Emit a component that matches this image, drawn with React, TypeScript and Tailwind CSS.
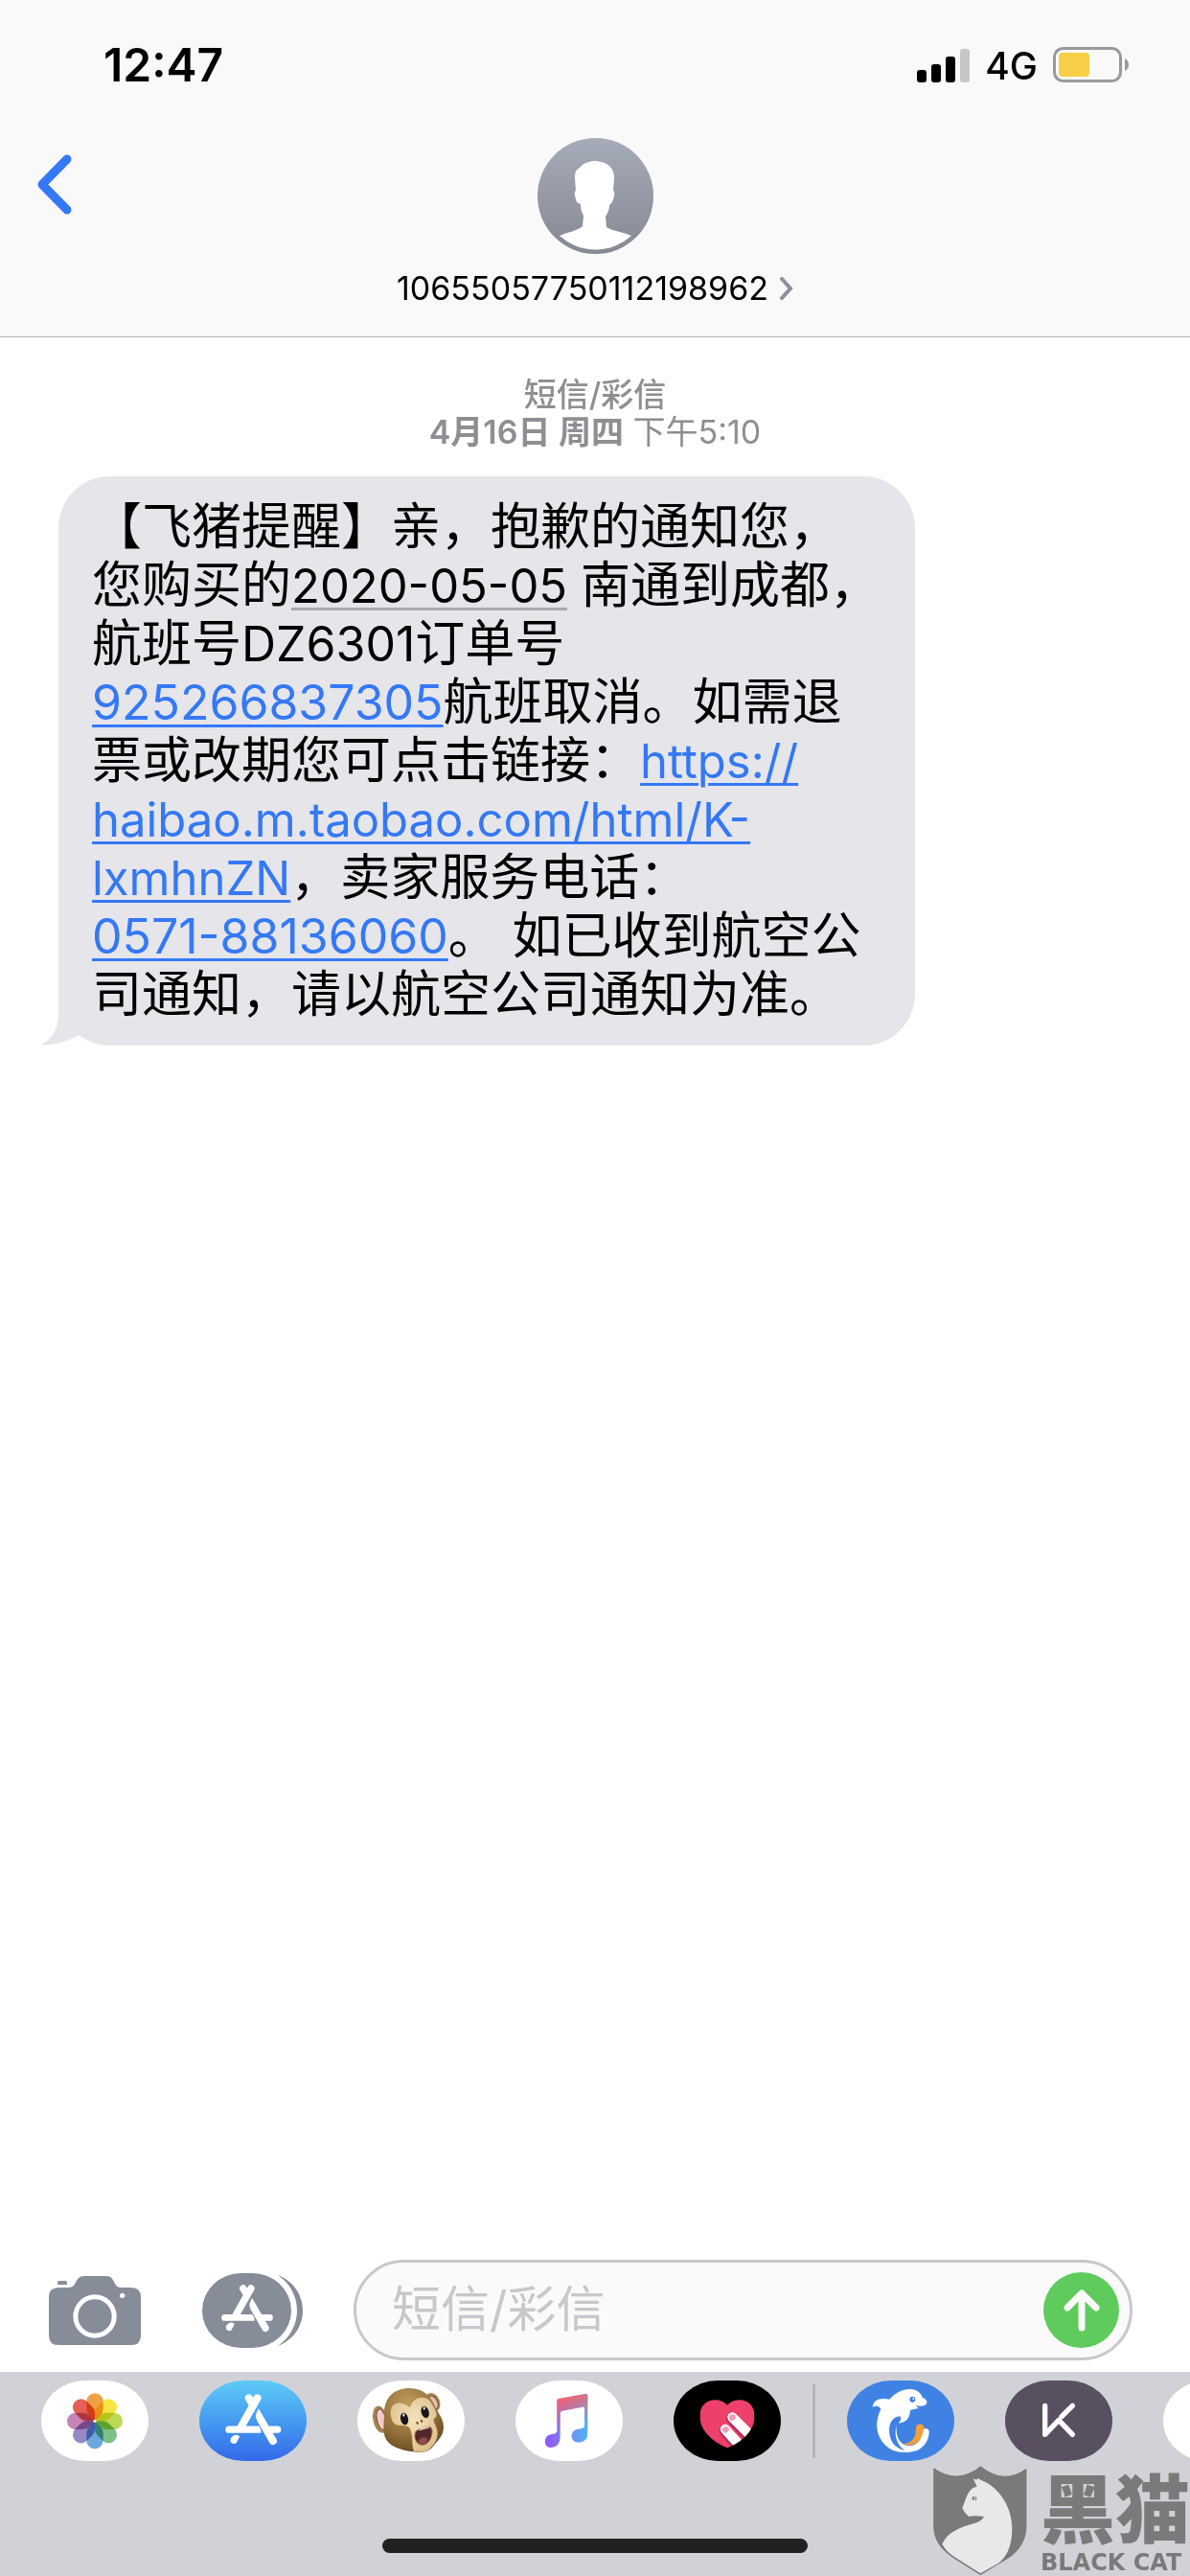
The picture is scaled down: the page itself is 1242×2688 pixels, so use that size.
import { ReactNode } from "react";

type AppButtonProps = {
	label: string;
	className: string;
	viewBox: string;
	children?: ReactNode;
};

const link =
	"leading-none text-[#3478f6] underline decoration-[3px] underline-offset-[5px]";

function AppStoreGlyph() {
	return (
		<g fill="#fff">
			<path d="M-77 21H17Q25 28 25 43H-77A11 11 0 0 1-77 21Z" />
			<path d="M44 21H77A11 11 0 0 1 77 43H56Z" />
			<path
				d="M13-68L-38 22M-14-68L0-44"
				fill="none"
				stroke="#fff"
				strokeWidth="24"
				strokeLinecap="round"
			/>
			<path d="M17-35L73 62A12 12 0 0 1 52 74L12 4Q2-14 17-35Z" />
			<path d="M-70 58Q-60 43-43 53L-53 73A11 11 0 0 1-72 63Z" />
		</g>
	);
}

function StatusBar() {
	return (
		<div className="flex h-34 items-center justify-between pr-[63px] pl-27">
			<span className="text-[48px] leading-none font-semibold">12:47</span>
			<div className="flex items-center">
				<svg width="55" height="35" viewBox="0 0 55 35">
					<rect y="22" width="10" height="13" rx="3" />
					<rect x="15" y="16" width="10" height="19" rx="3" />
					<rect x="30" y="8" width="10" height="27" rx="3" />
					<rect x="45" width="10" height="35" rx="3" fill="#c7c7c7" />
				</svg>
				<span className="ml-4 text-[39px] leading-none font-medium">4G</span>
				<svg className="ml-4" width="80" height="38" viewBox="0 0 80 38">
					<rect
						x="1.5"
						y="1.5"
						width="69"
						height="34"
						rx="9"
						fill="none"
						stroke="#999"
						strokeWidth="3"
					/>
					<rect x="6" y="6" width="32" height="25" rx="4" fill="#f7ce46" />
					<path d="M75 12Q79 14 79 18.500T75 25Z" fill="#999" />
				</svg>
			</div>
		</div>
	);
}

function Header() {
	return (
		<header className="border-b border-[#b2b2b2] bg-[#f9f9f9]">
			<StatusBar />
			<div className="grid grid-cols-[1fr_auto_1fr] items-start pt-2 pb-[30px]">
				<button
					type="button"
					aria-label="返回"
					className="mt-4 ml-9 justify-self-start"
				>
					<svg width="42" height="65" viewBox="0 0 42 65">
						<path
							d="M34 6L8 32.500L34 59"
							fill="none"
							stroke="#3478f6"
							strokeWidth="9"
							strokeLinecap="round"
							strokeLinejoin="round"
						/>
					</svg>
				</button>
				<button type="button" className="flex flex-col items-center gap-4">
					<svg width="121" height="121" viewBox="0 0 121 121">
						<defs>
							<linearGradient id="avatar" x1="0" y1="0" x2="0" y2="1">
								<stop offset="0" stopColor="#a6abb9" />
								<stop offset="1" stopColor="#848992" />
							</linearGradient>
						</defs>
						<circle cx="60.500" cy="60.500" r="60.500" fill="url(#avatar)" />
						<path
							d="M60.500 24C70 25 80 28 80 42L79 55C82 57 79 63 78 67L75 70Q75 76 71 82L72 93C77 97 90 98 98 102A56 56 0 0 1 23 102C31 98 42 97 47 92L48 81Q45 76 45 69L41 67C40 63 37 57 40 55L39 42C39 34 41 33 44 31C48 26 54 24 60.500 24Z"
							fill="#fff"
						/>
					</svg>
					<span className="flex items-center gap-3 text-[34px] leading-10">
						10655057750112198962
						<svg width="14" height="24" viewBox="0 0 14 24">
							<path
								d="M2 2L11 12L2 22"
								fill="none"
								stroke="#8a919c"
								strokeWidth="4"
								strokeLinecap="round"
							/>
						</svg>
					</span>
				</button>
			</div>
		</header>
	);
}

function Message() {
	return (
		<div className="relative mt-[27px] ml-[61px] w-[72%] rounded-[54px] bg-[#e5e5ea] px-[35px] pt-[22px] pb-[23px]">
			<svg
				className="absolute bottom-0 -left-[18px]"
				width="60"
				height="54"
				viewBox="0 0 60 54"
			>
				<path d="M18 0V22Q18 43 0 53.500Q20 54 39 43L60 30V0Z" fill="#e5e5ea" />
			</svg>
			<p className="relative text-[52px] leading-[61px] whitespace-nowrap">
				【飞猪提醒】亲，抱歉的通知您，
				<br />
				您购买的
				<span className="text-[49px] leading-none">
					<a
						href="#date"
						className="underline decoration-[#a9a9ae] decoration-[3px] underline-offset-[5px]"
					>
						2020-05-05
					</a>{" "}
				</span>
				南通到成都，
				<br />
				航班号<span className="text-[50px] leading-none">DZ6301</span>订单号
				<br />
				<a href="tel:925266837305" className={`text-[50px] ${link}`}>
					925266837305
				</a>
				航班取消。如需退
				<br />
				票或改期您可点击链接：
				<a href="#link" className={`text-[49px] ${link}`}>
					https://
					<br />
					haibao.m.taobao.com/html/K-
					<br />
					lxmhnZN
				</a>
				，卖家服务电话：
				<br />
				<a href="tel:0571-88136060" className={`text-[50px] ${link}`}>
					0571-88136060
				</a>
				。 如已收到航空公
				<br />
				司通知，请以航空公司通知为准。
			</p>
		</div>
	);
}

function Composer() {
	return (
		<form
			className="flex items-center pr-15 pb-3 pl-[51px]"
			onSubmit={(e) => e.preventDefault()}
		>
			<button type="button" aria-label="相机">
				<svg width="96" height="72" viewBox="153 129 288 216">
					<path
						d="M180 156V149Q180 144 186 144H204Q210 144 210 149V156ZM183 165H212Q228 165 233 156L241 142Q248 129 265 129H332Q348 129 354 142L362 156Q367 165 380 165H411Q441 165 441 195V315Q441 345 411 345H183Q153 345 153 315V195Q153 165 183 165Z"
						fill="#868c98"
					/>
					<circle
						cx="297"
						cy="255"
						r="60.500"
						fill="none"
						stroke="#fff"
						strokeWidth="15"
					/>
					<circle cx="383" cy="190" r="8" fill="#fff" />
				</svg>
			</button>
			<button type="button" aria-label="应用" className="ml-16">
				<svg width="105" height="78" viewBox="633 120 315 234">
					<g fill="#868c98">
						<rect x="633" y="120" width="279" height="234" rx="122" ry="117" />
						<path d="M870 126C920 145 948 190 948 237C948 284 920 329 870 348C908 322 930 282 930 237C930 192 908 152 870 126Z" />
					</g>
					<g transform="translate(774 230) scale(.915)">
						<AppStoreGlyph />
					</g>
				</svg>
			</button>
			<div className="ml-[53px] flex h-[105px] min-w-0 flex-1 items-center rounded-full border-[3px] border-[#c7c7cc] bg-[#fafafa] pr-[11px] pl-[37px]">
				<input
					type="text"
					aria-label="短信/彩信"
					placeholder="短信/彩信"
					className="min-w-0 flex-1 bg-transparent text-[51px] outline-none placeholder:text-[#c7c7cc]"
				/>
				<button
					type="submit"
					aria-label="发送"
					className="flex size-[79px] items-center justify-center rounded-full bg-[#5ecb5c]"
				>
					<svg width="38" height="44" viewBox="0 0 38 44">
						<path
							d="M19 4V40M4 19L19 4L34 19"
							fill="none"
							stroke="#fafafa"
							strokeWidth="7"
							strokeLinecap="round"
							strokeLinejoin="round"
						/>
					</svg>
				</button>
			</div>
		</form>
	);
}

function AppButton({ label, className, viewBox, children }: AppButtonProps) {
	return (
		<button
			type="button"
			aria-label={label}
			className={`h-21 w-28 shrink-0 overflow-hidden rounded-[46px/42px] ${className}`}
		>
			<svg width="112" height="84" viewBox={viewBox}>
				{children}
			</svg>
		</button>
	);
}

const petals = [
	{ angle: 0, color: "#f0a044" },
	{ angle: 45, color: "#f7e544" },
	{ angle: 90, color: "#bcd955" },
	{ angle: 135, color: "#7cc088" },
	{ angle: 180, color: "#6ba8dc" },
	{ angle: 225, color: "#978ac4" },
	{ angle: 270, color: "#c584b6" },
	{ angle: 315, color: "#e46058" },
];

function Monkey() {
	return (
		<>
			<defs>
				<radialGradient id="fur" cx=".4" cy=".25" r=".8">
					<stop offset="0" stopColor="#c09a5c" />
					<stop offset=".6" stopColor="#94703a" />
					<stop offset="1" stopColor="#634720" />
				</radialGradient>
				<radialGradient id="face" cx=".5" cy=".4" r=".7">
					<stop offset="0" stopColor="#f5e2bd" />
					<stop offset="1" stopColor="#d9bb85" />
				</radialGradient>
			</defs>
			<ellipse cx="111" cy="584" rx="23" ry="43" fill="#a58452" transform="rotate(-12 111 584)" />
			<ellipse cx="114" cy="584" rx="14" ry="33" fill="#f3c8c8" stroke="#6f552e" strokeWidth="3" transform="rotate(-12 114 584)" />
			<ellipse cx="275" cy="530" rx="22" ry="30" fill="#a58452" transform="rotate(-25 275 530)" />
			<ellipse cx="277" cy="531" rx="13" ry="22" fill="#eab9b4" stroke="#6f552e" strokeWidth="3" transform="rotate(-25 277 531)" />
			<path
				d="M123 566C122 515 155 486 202 486C245 486 270 512 284 548C300 575 312 590 308 617C304 640 290 650 276 668C262 686 240 689 214 685C175 680 136 668 125 638C118 615 123 590 123 566Z"
				fill="url(#fur)"
			/>
			<path
				d="M143 566C142 532 168 521 204 546C214 508 258 507 271 533C281 550 292 568 285 577C276 582 276 586 281 597C298 628 289 652 270 671C255 688 237 687 216 684C208 665 214 640 205 616C200 602 190 604 172 602C151 602 145 585 143 566Z"
				fill="url(#face)"
			/>
			<ellipse cx="186" cy="582" rx="12" ry="19" fill="#15171a" transform="rotate(-12 186 582)" />
			<ellipse cx="251" cy="561" rx="12" ry="19" fill="#15171a" transform="rotate(-16 251 561)" />
			<ellipse cx="184" cy="570" rx="3" ry="5" fill="#fff" />
			<ellipse cx="248" cy="549" rx="3" ry="5" fill="#fff" />
			<path
				d="M223 593L229 592L228 600ZM237 586L243 587L240 594Z"
				fill="#6a4a24"
				stroke="#6a4a24"
				strokeWidth="2"
			/>
			<path
				d="M219 632C219 618 229 615 243 613C254 610 262 602 270 610C277 620 272 644 260 656C249 667 232 666 225 655C220 648 218 640 219 632Z"
				fill="#52282b"
				stroke="#a87e50"
				strokeWidth="3"
			/>
			<path d="M232 616L262 607L265 610L233 619Z" fill="#f3eee2" />
			<path d="M228 653Q242 633 258 644L256 656Q240 668 228 653Z" fill="#8f4d50" />
		</>
	);
}

function AppStrip() {
	return (
		<div className="bg-[#d1d2d7] pt-[9px] pb-6">
			<div className="flex items-center gap-[33px] overflow-hidden pl-[43px]">
				<div className="flex gap-[53px]">
					<AppButton label="照片" className="bg-white" viewBox="-168 -127 336 252">
						<g className="isolate">
							{petals.map(({ angle, color }) => (
								<path
									key={angle}
									d="M-26-61A26 26 0 0 1 26-61V-37Q26-25 17-17L0 0L-17-17Q-26-25-26-37Z"
									fill={color}
									transform={`rotate(${angle})`}
									className="mix-blend-multiply"
								/>
							))}
						</g>
						<circle r="5" fill="#fff" />
					</AppButton>
					<AppButton
						label="App Store"
						className="bg-linear-to-b from-[#5fcbf6] to-[#3568e8]"
						viewBox="-171 -122 340 252"
					>
						<AppStoreGlyph />
					</AppButton>
					<AppButton label="动话表情" className="bg-white" viewBox="39 462 336 252">
						<Monkey />
					</AppButton>
					<AppButton label="音乐" className="bg-white" viewBox="534 462 336 252">
						<defs>
							<linearGradient id="noteBase">
								<stop offset="0" stopColor="#9455f5" />
								<stop offset="1" stopColor="#55b4f2" />
							</linearGradient>
							<linearGradient id="noteTop" x1="0" y1="0" x2=".25" y2="1">
								<stop offset=".15" stopColor="#f5646c" />
								<stop offset=".75" stopColor="#f5646c" stopOpacity="0" />
							</linearGradient>
						</defs>
						{["url(#noteBase)", "url(#noteTop)"].map((fill) => (
							<path
								key={fill}
								d="M664 526Q664 520 670 519L753 504Q760 503 760 510V630Q758 655 732 656C704 656 704 622 724 616C738 611 750 614 750 604V550Q750 543 743 545L680 557Q674 559 674 565V640Q672 671 646 672C620 672 622 638 640 632C652 629 664 630 664 618Z"
								fill={fill}
							/>
						))}
					</AppButton>
					<AppButton label="Digital Touch" className="bg-black" viewBox="1029 462 336 252">
						<clipPath id="heart">
							<path d="M1197 539C1175 512 1111 515 1111 574C1111 620 1155 656 1197 673C1240 656 1283 620 1283 574C1283 515 1219 512 1197 539Z" />
						</clipPath>
						<g clipPath="url(#heart)" strokeLinecap="round">
							<rect x="1111" y="510" width="172" height="165" fill="#ed416b" />
							<path
								d="M1209 583L1265 641M1187 621L1235 676"
								stroke="#b82d56"
								strokeWidth="30"
							/>
							<path
								d="M1213 577L1273 637M1191 615L1241 670"
								stroke="#fff"
								strokeWidth="31"
							/>
							<path
								d="M1203 572Q1212 564 1222 570L1224 580Q1219 588 1211 589Q1201 584 1203 572ZM1182 611Q1191 603 1201 608L1203 618Q1198 626 1190 627Q1180 621 1182 611Z"
								fill="#f29ab4"
							/>
						</g>
					</AppButton>
				</div>
				<div className="h-[78px] w-[3px] shrink-0 rounded-full bg-[#b4b5ba]" />
				<div className="flex gap-[53px]">
					<AppButton label="携程旅行" className="bg-[#4082e4]" viewBox="189 462 336 252">
						<path
							d="M270 545C270 524 291 514 322 521C342 498 368 487 390 489C410 491 422 503 426 516C437 519 441 526 438 534C434 543 420 544 404 540L413 549C402 551 394 552 387 556C385 581 376 593 350 596C358 588 359 579 355 574C331 576 318 598 322 628C325 656 341 674 372 682C350 668 334 640 344 603C341 640 355 664 382 666C410 668 422 645 424 624C426 610 442 607 446 620C447 646 432 670 410 680C380 690 346 690 321 674C278 645 274 592 295 553C291 541 279 541 270 545Z"
							fill="#fff"
						/>
						<path
							d="M407 603C413 594 432 598 431 612C426 620 428 636 414 652C402 665 382 668 362 660C386 661 401 645 404 625Q403 611 407 603Z"
							fill="#f2a03c"
						/>
						<circle cx="394" cy="521" r="9" fill="#4082e4" />
						<circle cx="397" cy="519" r="3" fill="#fff" />
					</AppButton>
					<AppButton label="Keep" className="bg-[#584f60]" viewBox="684 462 336 252">
						<path
							d="M809 541V631L852 586L895 631M895 541L861 575"
							fill="none"
							stroke="#fff"
							strokeWidth="16"
							strokeLinecap="round"
							strokeLinejoin="round"
						/>
					</AppButton>
					<AppButton label="更多" className="bg-white" viewBox="0 0 336 252" />
				</div>
			</div>
			<div className="mx-auto mt-[81px] h-[15px] w-111 rounded-full bg-[#212121]" />
		</div>
	);
}

function Watermark() {
	return (
		<div className="pointer-events-none absolute right-0 bottom-0 flex items-end gap-[14px] text-[#7a7a7b]">
			<svg width="98" height="115" viewBox="458 729 294 345">
				<path
					d="M460 737Q535 790 606 731Q680 790 749 739V915C749 960 730 994 690 1019L606 1070L525 1019C480 990 460 960 460 915Z"
					fill="#7a7a7b"
					stroke="#69696a"
					strokeWidth="2"
				/>
				<path
					d="M583 769L593 773L598 768L608 774C665 795 705 860 705 925C705 980 688 1015 662 1034L606 1066L530 1018Q500 1000 486 974C500 940 540 920 590 908C603 904 612 898 617 888C600 886 585 885 570 888C555 875 549 865 550 857C560 843 562 800 595 794Z"
					fill="#e8e8ea"
				/>
				<path d="M579 834Q580 824 589 824L585 831L588 837ZM591 825Q598 832 589 839Z" fill="#69696a" />
			</svg>
			<div className="flex flex-col whitespace-nowrap">
				<span className="text-[78px] leading-20 font-black">黑猫</span>
				<span className="font-['DejaVu_Sans',sans-serif] text-[24px] leading-7 font-bold">
					BLACK CAT
				</span>
			</div>
		</div>
	);
}

export default function App() {
	return (
		<div
			lang="zh-CN"
			className="relative flex min-h-screen flex-col overflow-hidden bg-white font-['Inter','Noto_Sans_CJK_SC',sans-serif] text-black"
		>
			<Header />
			<main className="flex-1 pt-10">
				<div className="text-center text-[34px] leading-[39px] text-[#8e8e93]">
					<p className="font-medium">短信/彩信</p>
					<p>
						<span className="font-semibold">4月16日 周四</span> 下午5:10
					</p>
				</div>
				<Message />
			</main>
			<footer>
				<Composer />
				<AppStrip />
			</footer>
			<Watermark />
		</div>
	);
}
